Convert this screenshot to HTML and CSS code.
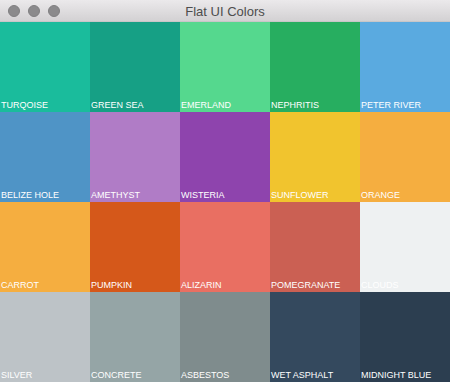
FILE: index.html
```html
<!DOCTYPE html>
<html lang="en">
<head>
    <meta charset="UTF-8">
    <title>Flat UI Colors</title>
    <link rel="stylesheet" href="styles.css">
</head>
<body>

<div class="window">
    <div class="titlebar">
        <div class="lights">
            <span class="light"></span>
            <span class="light"></span>
            <span class="light"></span>
        </div>
        <span class="title">Flat UI Colors</span>
    </div>

    <div class="palette">
        <div class="tile turquoise"><span>TURQOISE</span></div>
        <div class="tile green-sea"><span>GREEN SEA</span></div>
        <div class="tile emerald"><span>EMERLAND</span></div>
        <div class="tile nephritis"><span>NEPHRITIS</span></div>
        <div class="tile peter-river"><span>PETER RIVER</span></div>

        <div class="tile belize-hole"><span>BELIZE HOLE</span></div>
        <div class="tile amethyst"><span>AMETHYST</span></div>
        <div class="tile wisteria"><span>WISTERIA</span></div>
        <div class="tile sunflower"><span>SUNFLOWER</span></div>
        <div class="tile orange"><span>ORANGE</span></div>

        <div class="tile carrot"><span>CARROT</span></div>
        <div class="tile pumpkin"><span>PUMPKIN</span></div>
        <div class="tile alizarin"><span>ALIZARIN</span></div>
        <div class="tile pomegranate"><span>POMEGRANATE</span></div>
        <div class="tile clouds"><span>CLOUDS</span></div>

        <div class="tile silver"><span>SILVER</span></div>
        <div class="tile concrete"><span>CONCRETE</span></div>
        <div class="tile asbestos"><span>ASBESTOS</span></div>
        <div class="tile wet-asphalt"><span>WET ASPHALT</span></div>
        <div class="tile midnight-blue"><span>MIDNIGHT BLUE</span></div>
    </div>
</div>

</body>
</html>
```

FILE: styles.css
```css
* {
    margin: 0;
    padding: 0;
    box-sizing: border-box;
}

body {
    font-family: 'Liberation Sans', Arial, sans-serif;
    background-color: #ffffff;
    width: 450px;
    height: 382px;
    overflow: hidden;
}

.window {
    display: flex;
    flex-direction: column;
    width: 450px;
}

.titlebar {
    height: 22px;
    display: flex;
    align-items: center;
    justify-content: center;
    background: linear-gradient(#ebe9eb, #d3d1d3);
    border-bottom: 1px solid #c8c6c8;
    position: relative;
}

.lights {
    position: absolute;
    left: 8px;
    top: 5px;
    display: flex;
    gap: 8px;
}

.light {
    width: 12px;
    height: 12px;
    border-radius: 50%;
    background-color: #8b8a8c;
    border: 1px solid #807f81;
}

.title {
    font-size: 13px;
    color: #4d4d4d;
    padding-top: 1px;
}

.palette {
    display: grid;
    grid-template-columns: repeat(5, 90px);
    grid-auto-rows: 90px;
}

.tile {
    display: flex;
    align-items: flex-end;
    padding: 0 0 1px 1px;
}

.tile span {
    color: #ffffff;
    font-size: 9px;
    line-height: 11px;
}

.turquoise { background-color: #1abc9c; }
.green-sea { background-color: #16a085; }
.emerald { background-color: #55d88e; }
.nephritis { background-color: #27ae60; }
.peter-river { background-color: #5aaae0; }

.belize-hole { background-color: #4f94c6; }
.amethyst { background-color: #b07cc6; }
.wisteria { background-color: #8e44ad; }
.sunflower { background-color: #f1c42e; }
.orange { background-color: #f5ae40; }

.carrot { background-color: #f5ae40; }
.pumpkin { background-color: #d5581a; }
.alizarin { background-color: #e96f62; }
.pomegranate { background-color: #cb6053; }
.clouds { background-color: #eef1f2; }

.silver { background-color: #bdc3c7; }
.concrete { background-color: #95a5a6; }
.asbestos { background-color: #7f8c8d; }
.wet-asphalt { background-color: #34495e; }
.midnight-blue { background-color: #2c3e50; }
```
